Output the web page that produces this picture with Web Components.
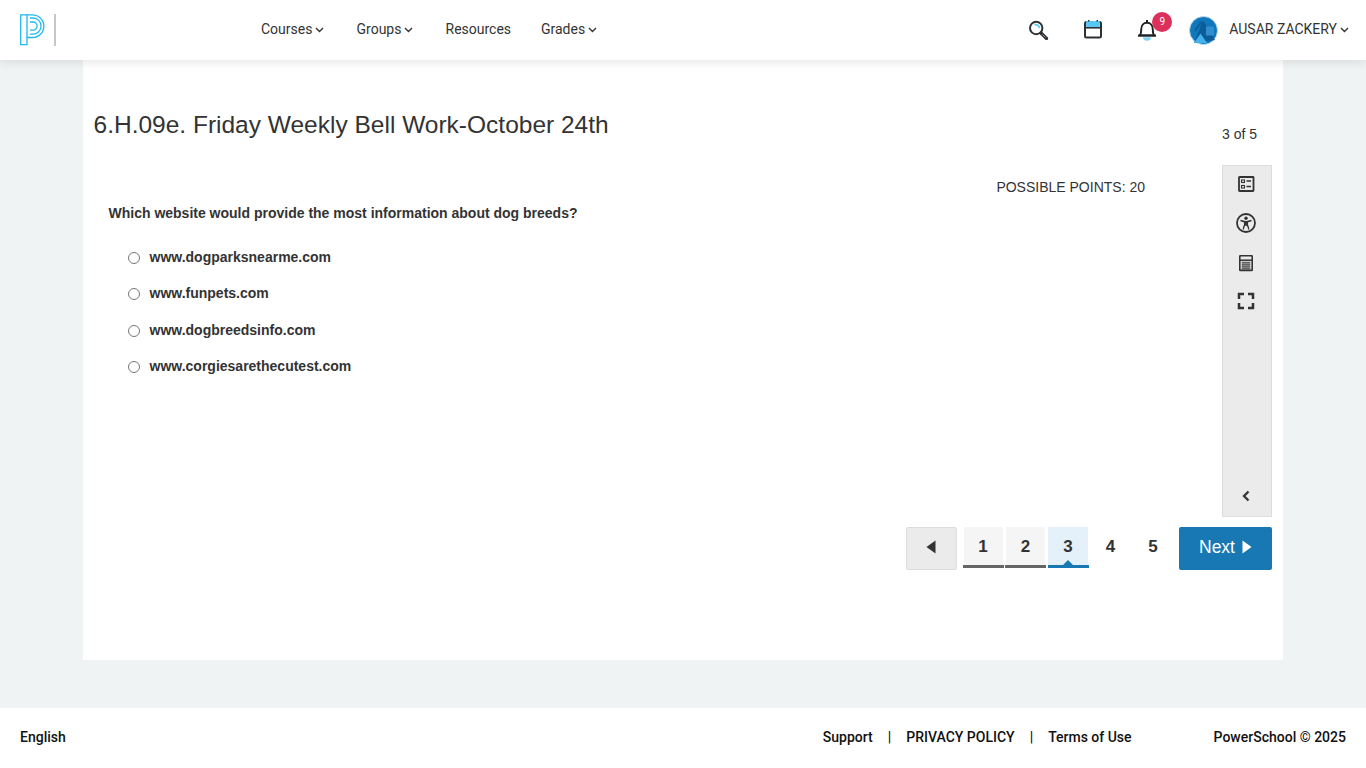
<!DOCTYPE html>
<html lang="en"><head><meta charset="utf-8"><title>Bell Work</title>
<style>
html,body{margin:0;padding:0;height:768px;overflow:hidden;background:#f0f3f4;font-family:"Liberation Sans",Arial,sans-serif;color:#333}
body{display:flex;flex-direction:column}
</style></head><body>
<app-header></app-header>
<quiz-page></quiz-page>
<app-footer></app-footer>
<script>
const chev='<svg width="9" height="6" viewBox="0 0 9 6" style="margin-left:3px;margin-top:2px"><path d="M1 1l3.5 3.5L8 1" fill="none" stroke="#333" stroke-width="1.4"/></svg>';
class Base extends HTMLElement{
  constructor(){super();this.attachShadow({mode:'open'}).innerHTML=this.constructor.html}
}
class NavItem extends Base{
  static html=`<style>:host{display:inline-flex;align-items:center;font:14px/20px Roboto,sans-serif;color:#333}</style><slot></slot><span id="c" style="display:inline-flex"></span>`;
  connectedCallback(){if(this.hasAttribute('menu'))this.shadowRoot.getElementById('c').innerHTML=chev}
}
customElements.define('nav-item',NavItem);
class AppHeader extends Base{
  static html=`<style>
  :host{display:flex;align-items:center;height:60px;flex:none;background:#fff;box-shadow:0 2px 10px rgba(0,0,0,.1);position:relative;z-index:2;font-family:Roboto,sans-serif}
  .logo{display:flex;align-items:center;margin-left:19px;width:242px;flex:none}
  .sep{width:2px;height:32px;background:#c4c8c9;margin-left:9px}
  nav{display:flex;padding-bottom:2px}
  nav-item:nth-child(1){width:95.500px}nav-item:nth-child(2){width:89px}nav-item:nth-child(3){width:95.500px}
  .right{margin-left:auto;display:flex;align-items:center;padding-right:17px}
  .ic{display:flex;flex:none}
  .bell{position:relative;margin-left:34px;margin-right:32px}
  .badge{position:absolute;left:15px;top:-7px;width:20px;height:20px;border-radius:50%;background:#dc2f5b;color:#fff;font:10px/20px Roboto,sans-serif;text-align:center}
  .user{margin-left:11px;font-size:14px;color:#333;display:flex;align-items:center;padding-bottom:2px}
  </style>
  <div class="logo"><svg width="26" height="32" viewBox="0 0 26 32" fill="none" stroke="#1fb9ee" stroke-width="1.300"><path d="M1.700.8V30.700H8V23.500H13.500A11.350 11.350 0 0 0 13.500.8Z"/><path d="M8 .8V23.500"/><path d="M11 4H14a7.900 7.900 0 0 1 0 16.200H11"/><path d="M11 8h3a4 4 0 0 1 0 8.200h-3"/></svg><div class="sep"></div></div>
  <nav><nav-item menu>Courses</nav-item><nav-item menu>Groups</nav-item><nav-item>Resources</nav-item><nav-item menu>Grades</nav-item></nav>
  <div class="right">
   <svg class="ic" width="20" height="20" viewBox="0 0 20 20" fill="none"><circle cx="7.200" cy="8" r="6.200" stroke="#2e3133" stroke-width="2"/><path d="M5.500 4.700a4 4 0 0 1 5 3.300" stroke="#5cc9f3" stroke-width="1.800"/><path d="M12 13l5.500 5.500" stroke="#2e3133" stroke-width="3.200" stroke-linecap="round"/><path d="M13.500 14.500l3 3" stroke="#8f9496" stroke-width="1"/></svg>
   <svg class="ic" style="margin-left:34px" width="20" height="20" viewBox="0 0 20 20" fill="none"><rect x="2" y="2" width="16" height="15.500" rx="1.500" stroke="#2e3133" stroke-width="2"/><rect x="3.200" y="1" width="13.600" height="6" fill="#55c8f5"/><path d="M5 .7h1.500M13.500 .7H15" stroke="#2e3133" stroke-width="1.400"/><path d="M2 7.800h16" stroke="#2e3133" stroke-width="1.600"/></svg>
   <div class="bell ic"><svg width="20" height="22" viewBox="0 0 20 22" fill="none"><path d="M2.800 16.500c1.400-1.500 1.400-3 1.400-6 0-4 2.300-6.800 5.800-6.800s5.800 2.800 5.800 6.800c0 3 0 4.500 1.400 6z" stroke="#1f2224" stroke-width="1.900"/><path d="M1 16.500h18" stroke="#1f2224" stroke-width="1.900"/><path d="M10 1v2.500" stroke="#1f2224" stroke-width="2"/><path d="M6 18.300h8a4 3.400 0 0 1-8 0z" fill="#7cd4f5"/></svg><span class="badge">9</span></div>
   <svg class="ic" width="29" height="29" viewBox="0 0 29 29"><circle cx="14.500" cy="14.500" r="14" fill="#0f78bd" stroke="#cfe3f0" stroke-width=".8"/><path d="M5 27L14 4.500 26 24z" fill="#0b5c97"/><path d="M6 15l1-1v-2l2-.5v-2l2-.5V7l2-1" fill="none" stroke="#0b5c97" stroke-width="1.500"/><path d="M5 27l6.500-9.500L18 27z" fill="#44b1ec"/><rect x="17" y="10.500" width="8" height="9" fill="#2f8ecb"/></svg>
   <span class="user">AUSAR ZACKERY<span style="display:inline-flex">${chev}</span></span>
  </div>`;
}
customElements.define('app-header',AppHeader);
class RadioOption extends Base{
  static html=`<style>:host{display:flex;align-items:center;height:36.400px;font:bold 14px/18px "Liberation Sans",Arial,sans-serif;color:#333}
  i{box-sizing:border-box;width:12px;height:12px;border:1px solid #767676;border-radius:50%;margin:1px 9.500px 0 0;background:#fff;flex:none}
  span{margin-top:-1px}</style><i></i><span><slot></slot></span>`;
}
customElements.define('radio-option',RadioOption);
class ToolRail extends Base{
  static html=`<style>:host{box-sizing:border-box;display:flex;flex-direction:column;align-items:center;width:50px;height:352px;background:#ebebeb;border:1px solid #ddd;padding-top:9px}
  svg{display:block;flex:none;margin-left:-2px}
  .a{height:39px;display:flex;align-items:flex-start;justify-content:center}
  .up{margin-top:-1px;margin-bottom:1px}
  .dn{margin-top:1px;margin-bottom:-1px}
  .end{margin-top:auto;height:26px}
  </style>
  <div class="a"><svg width="18" height="18" viewBox="0 0 18 18" fill="none" stroke="#333"><rect x="2" y="2" width="14.500" height="14" rx=".5" stroke-width="1.800"/><rect x="4.500" y="5" width="3" height="2.500" stroke-width="1.100"/><rect x="4.500" y="10.500" width="3" height="2.500" stroke-width="1.100"/><path d="M9.500 6h4.500M9.500 11.500h4.500" stroke-width="1.400"/></svg></div>
  <div class="a up"><svg width="20" height="20" viewBox="0 0 20 20" fill="none" stroke="#333"><circle cx="10" cy="10" r="9" stroke-width="1.800"/><circle cx="10" cy="5.200" r="1.700" fill="#333" stroke="none"/><path d="M4.500 7.500L10 9l5.500-1.500" stroke-width="1.800"/><path d="M8.600 8.500v3.500l-1.500 4.500M11.400 8.500v3.500l1.500 4.500M8.600 8.700h2.800v3.500H8.600z" stroke-width="1.300" fill="#333"/></svg></div>
  <div class="a dn"><svg width="18" height="18" viewBox="0 0 18 18" fill="none"><rect x="2.800" y="1.800" width="12.400" height="14.600" rx=".5" stroke="#333" stroke-width="1.600"/><path d="M3 6.200h12" stroke="#333" stroke-width="1.500"/><path d="M4.500 8.800h9M4.500 10.800h9M4.500 12.800h9M4.500 14.800h9M6 7.500v8M8 7.500v8M10 7.500v8M12 7.500v8" stroke="#333" stroke-width=".8"/></svg></div>
  <div class="a"><svg width="18" height="18" viewBox="0 0 18 18" fill="none" stroke="#333" stroke-width="2.500"><path d="M2 7V2h5M11 2h5v5M16 11v5h-5M7 16H2v-5"/></svg></div>
  <div class="end"><svg width="10" height="12" viewBox="0 0 10 12" fill="none"><path d="M7.500 1.500L3 6l4.500 4.500" stroke="#333" stroke-width="2.300"/></svg></div>`;
}
customElements.define('tool-rail',ToolRail);
class PageNum extends Base{
  static html=`<style>:host{box-sizing:content-box;display:block;position:relative;width:41px;height:38px;margin-right:1.500px;padding-bottom:3px;font:bold 17px/39px "Liberation Sans",Arial,sans-serif;text-align:center;color:#333}
  :host([s="done"]){border-bottom:3px solid #666;padding:0;background:linear-gradient(90deg,#fff 1px,#f5f5f5 1px,#f5f5f5 40px,#fff 40px)}
  :host([s="cur"]){border-bottom:3px solid #1878b4;padding:0;background:linear-gradient(90deg,#e4f1fb 40px,#fff 40px)}
  :host([s="cur"])::after{content:"";position:absolute;left:15px;bottom:0;border:5px solid transparent;border-top:0;border-bottom:5px solid #1878b4}
  </style><slot></slot>`;
}
customElements.define('page-num',PageNum);
class QuizPage extends Base{
  static html=`<style>
  :host{display:block;flex:none;box-sizing:border-box;width:1200px;height:600px;margin:0 0 48px 83px;background:#fff;position:relative;padding:49px 11px 0 11px}
  .head{display:flex;justify-content:space-between}
  h1{margin:1px 0 0 -.5px;font:400 24.500px/30px "Liberation Sans",Arial,sans-serif;color:#333}
  .count{font:14px/18px "Liberation Sans",Arial,sans-serif;margin:16px 15px 0 0;color:#333}
  .mid{display:flex;justify-content:space-between;margin-top:22px}
  .content{flex:1;padding-left:15px}
  .pts{font:14px/18px "Liberation Sans",Arial,sans-serif;text-align:right;padding:13px 77px 0 0;color:#333}
  .q{font:bold 14px/18px "Liberation Sans",Arial,sans-serif;margin:8px 0 17.400px -.5px;color:#333}
  .opts{padding-left:19px}
  .pager{display:flex;justify-content:flex-end;margin-top:10px;align-items:flex-start}
  .prev{box-sizing:border-box;width:51px;height:43px;background:#ebebeb;border:1px solid #ddd;border-radius:2px;display:flex;align-items:center;justify-content:center;margin-right:6px}
  .prev svg{margin:-3px 0 0 -1px}
  .next{box-sizing:border-box;width:93px;height:43px;margin-left:4px;padding-bottom:3px;background:#1878b4;color:#fff;border-radius:2px;font:17.500px/40px "Liberation Sans",Arial,sans-serif;display:flex;align-items:center;justify-content:center;gap:7px}
  </style>
  <div class="head"><h1>6.H.09e. Friday Weekly Bell Work-October 24th</h1><div class="count">3 of 5</div></div>
  <div class="mid"><div class="content"><div class="pts">POSSIBLE POINTS: 20</div><div class="q">Which website would provide the most information about dog breeds?</div>
  <div class="opts"><radio-option>www.dogparksnearme.com</radio-option><radio-option>www.funpets.com</radio-option><radio-option>www.dogbreedsinfo.com</radio-option><radio-option>www.corgiesarethecutest.com</radio-option></div></div><tool-rail></tool-rail></div>
  <div class="pager"><div class="prev"><svg width="10" height="14" viewBox="0 0 10 14"><path d="M9.500 .5v13L.5 7z" fill="#333"/></svg></div>
  <page-num s="done">1</page-num><page-num s="done">2</page-num><page-num s="cur">3</page-num><page-num>4</page-num><page-num>5</page-num>
  <div class="next">Next <svg width="10" height="14" viewBox="0 0 10 14"><path d="M.5 .5v13L9.500 7z" fill="#fff"/></svg></div></div>`;
}
customElements.define('quiz-page',QuizPage);
class AppFooter extends Base{
  static html=`<style>:host{box-sizing:border-box;display:flex;align-items:center;flex:none;height:60px;background:#fff;padding:0 20px 2px;font:500 14px/18px Roboto,sans-serif;color:#111}
  .links{margin-left:auto;display:flex;margin-right:82px}
  .links i{font-style:normal;margin:0 15px}
  </style><span>English</span><div class="links"><span>Support</span><i>|</i><span>PRIVACY POLICY</span><i>|</i><span>Terms of Use</span></div><span>PowerSchool © 2025</span>`;
}
customElements.define('app-footer',AppFooter);
</script></body></html>
